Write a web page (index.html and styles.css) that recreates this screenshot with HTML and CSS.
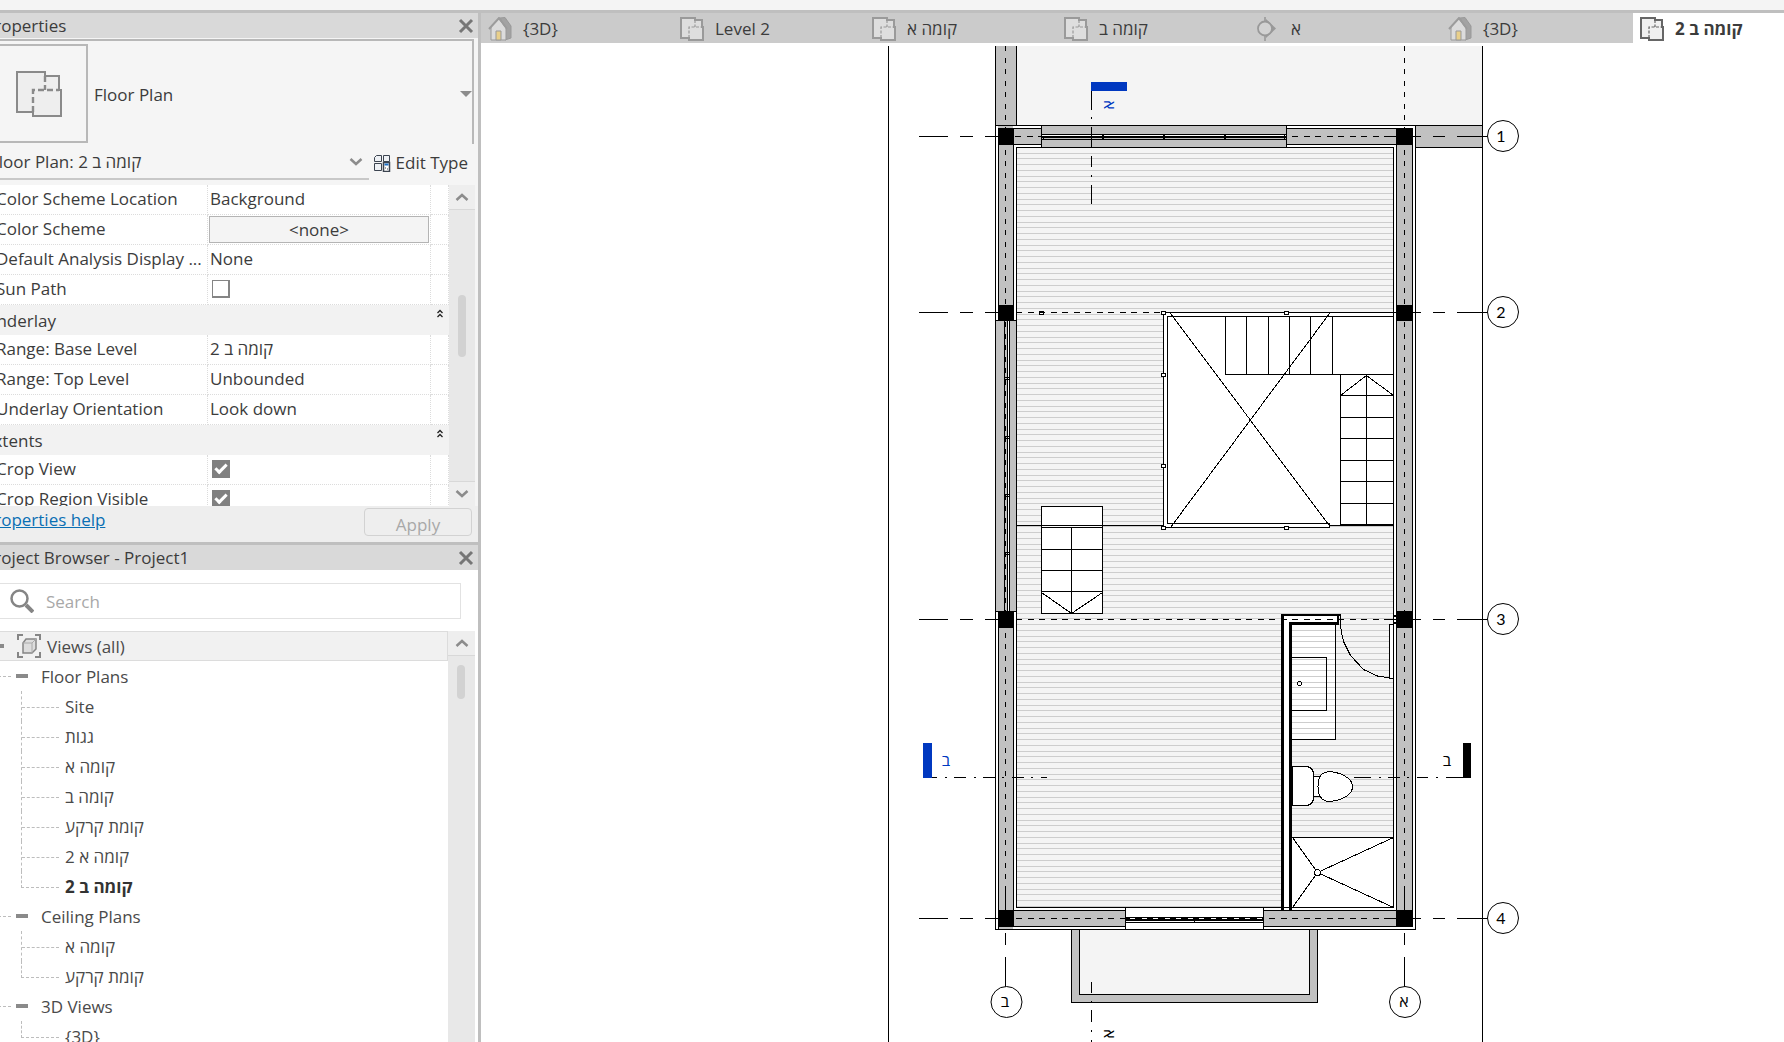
FILE: index.html
```html
<!DOCTYPE html>
<html lang="en">
<head>
    <meta charset="UTF-8">
    <meta name="viewport" content="width=device-width, initial-scale=1.0">
    <title>Project1 - Floor Plan</title>
    <link rel="stylesheet" href="styles.css">
</head>
<body>
    <!-- shared icons -->
    <svg class="defs" aria-hidden="true">
        <symbol id="icon-plan" viewBox="0 0 24 24">
            <path d="M1 1h14v2h7v7h1v13H9v-2H1z" stroke="currentColor" stroke-width="2" vector-effect="non-scaling-stroke"/>
            <path d="M15 3v7M9 21V10h13" fill="none" stroke="currentColor" stroke-width="1.200" stroke-dasharray="3 1.500"/>
        </symbol>
        <symbol id="icon-house" viewBox="0 0 24 24">
            <path d="M12 1l5-.5L23 9v12l-6 2V10z" fill="#a3a3a3" stroke="#999"/>
            <path d="M3 10l8-8 7 9v12H3z" fill="#dcdcdc" stroke="#999"/>
            <path d="M1 12L11 1l8 11" fill="none" stroke="#9c9c9c" stroke-width="2"/>
            <path d="M8 23v-9h5v9z" fill="#e8cf8a" stroke="#999"/>
        </symbol>
        <symbol id="icon-section" viewBox="0 0 24 24">
            <path d="M10 2l10 9.500-10 9.500z" fill="#999"/>
            <circle cx="9" cy="11.500" r="7" fill="#d2d2d2" stroke="#999" stroke-width="1.800"/>
            <path d="M9 0v4M9 19v5" stroke="#999" stroke-width="1.600"/>
        </symbol>
        <symbol id="icon-close" viewBox="0 0 16 16">
            <path d="M2 2l12 12M14 2L2 14" stroke="#767676" stroke-width="3"/>
        </symbol>
        <symbol id="icon-up" viewBox="0 0 14 8">
            <path d="M1.500 7L7 2l5.500 5" fill="none" stroke="#8c8c8c" stroke-width="2.500"/>
        </symbol>
        <symbol id="icon-down" viewBox="0 0 14 8">
            <path d="M1.500 1L7 6l5.500-5" fill="none" stroke="#8c8c8c" stroke-width="2.500"/>
        </symbol>
        <symbol id="icon-collapse" viewBox="0 0 6 9">
            <path d="M.5 4L3 1.500 5.500 4M.5 8L3 5.500 5.500 8" fill="none" stroke="#222" stroke-width="1.300"/>
        </symbol>
    </svg>

    <div class="ribbon"></div>

    <div class="workspace">
        <aside class="sidebar">
            <section class="panel properties">
                <header class="panel-header">
                    <h2>Properties</h2>
                    <button class="close" aria-label="Close Properties"><svg><use href="#icon-close"/></svg></button>
                </header>

                <button class="type-selector">
                    <span class="preview"><svg><use href="#icon-plan"/></svg></span>
                    <span class="type-name">Floor Plan</span>
                    <svg class="arrow" viewBox="0 0 12 6"><path d="M0 0h12L6 6z" fill="#8c8c8c"/></svg>
                </button>

                <div class="instance">
                    <div class="instance-select">
                        <select aria-label="View">
                            <option>Floor Plan: קומה ב 2</option>
                        </select>
                        <svg class="chevron"><use href="#icon-down"/></svg>
                    </div>
                    <button class="edit-type">
                        <svg viewBox="0 0 17 17" fill="#eef1f5" stroke="#3c4450">
                            <path d="M2.500.5h5v6h-7v-4zM9.500.5h6v6h-6zM.5 8.500h7v7h-7z"/>
                            <path d="M9.500 7.500h6v9h-6z" fill="#fff" stroke-width="1.500"/>
                            <path d="M10.500 9.500h4" stroke="#1c6fc4" stroke-width="2"/>
                            <path d="M11 13h1M13 14h1" stroke-width="1"/>
                        </svg>
                        Edit Type
                    </button>
                </div>

                <div class="scroll-area">
                    <table class="params">
                        <colgroup>
                            <col class="col-name">
                            <col class="col-value">
                            <col class="col-link">
                        </colgroup>
                        <tbody>
                            <tr><th scope="row">Color Scheme Location</th><td>Background</td><td></td></tr>
                            <tr><th scope="row">Color Scheme</th><td class="button-cell"><button class="scheme">&lt;none&gt;</button></td><td></td></tr>
                            <tr><th scope="row">Default Analysis Display ...</th><td>None</td><td></td></tr>
                            <tr><th scope="row"><label for="sunPath">Sun Path</label></th><td><input type="checkbox" id="sunPath"></td><td></td></tr>
                            <tr class="group"><th colspan="3">Underlay <svg><use href="#icon-collapse"/></svg></th></tr>
                            <tr><th scope="row">Range: Base Level</th><td>קומה ב 2</td><td></td></tr>
                            <tr><th scope="row">Range: Top Level</th><td>Unbounded</td><td></td></tr>
                            <tr><th scope="row">Underlay Orientation</th><td>Look down</td><td></td></tr>
                            <tr class="group"><th colspan="3">Extents <svg><use href="#icon-collapse"/></svg></th></tr>
                            <tr><th scope="row"><label for="cropView">Crop View</label></th><td><input type="checkbox" id="cropView" checked></td><td></td></tr>
                            <tr><th scope="row"><label for="cropRegion">Crop Region Visible</label></th><td><input type="checkbox" id="cropRegion" checked></td><td></td></tr>
                        </tbody>
                    </table>
                    <div class="scrollbar">
                        <button aria-label="Scroll up"><svg><use href="#icon-up"/></svg></button>
                        <div class="track"><div class="thumb"></div></div>
                        <button aria-label="Scroll down"><svg><use href="#icon-down"/></svg></button>
                    </div>
                </div>

                <footer class="panel-footer">
                    <a href="#">Properties help</a>
                    <button class="apply" disabled>Apply</button>
                </footer>
            </section>

            <section class="panel browser">
                <header class="panel-header">
                    <h2>Project Browser - Project1</h2>
                    <button class="close" aria-label="Close Project Browser"><svg><use href="#icon-close"/></svg></button>
                </header>

                <div class="search">
                    <svg viewBox="0 0 24 24" fill="none" stroke="#858585">
                        <circle cx="9.500" cy="9.500" r="8" stroke-width="2.500"/>
                        <path d="M16 16l7 7" stroke-width="4"/>
                    </svg>
                    <input type="text" placeholder="Search" aria-label="Search">
                </div>

                <div class="scroll-area">
                    <div class="tree">
                        <div class="tree-root">
                            <button class="toggle" aria-label="Collapse Views"></button>
                            <svg viewBox="0 0 24 24" fill="none" stroke="#858585">
                                <path d="M1 6V1h5M18 1h5v5M23 18v5h-5M6 23H1v-5" stroke-width="2"/>
                                <path d="M6 9l3-4h10v10l-4 4H6z" fill="#ddd" stroke-width="1.500"/>
                                <path d="M6 9h9v10M15 9l4-4" stroke="#aaa"/>
                            </svg>
                            <a href="#">Views (all)</a>
                        </div>

                        <div class="branch"><button class="toggle" aria-label="Collapse Floor Plans"></button><a href="#">Floor Plans</a></div>
                        <ul class="leaves">
                            <li><a href="#">Site</a></li>
                            <li><a href="#">גגות</a></li>
                            <li><a href="#">קומה א</a></li>
                            <li><a href="#">קומה ב</a></li>
                            <li><a href="#">קומת קרקע</a></li>
                            <li><a href="#">קומה א 2</a></li>
                            <li><a href="#" class="current">קומה ב 2</a></li>
                        </ul>

                        <div class="branch"><button class="toggle" aria-label="Collapse Ceiling Plans"></button><a href="#">Ceiling Plans</a></div>
                        <ul class="leaves">
                            <li><a href="#">קומה א</a></li>
                            <li><a href="#">קומת קרקע</a></li>
                        </ul>

                        <div class="branch"><button class="toggle" aria-label="Collapse 3D Views"></button><a href="#">3D Views</a></div>
                        <ul class="leaves">
                            <li><a href="#">{3D}</a></li>
                        </ul>
                    </div>
                    <div class="scrollbar">
                        <button aria-label="Scroll up"><svg><use href="#icon-up"/></svg></button>
                        <div class="track"><div class="thumb"></div></div>
                    </div>
                </div>
            </section>
        </aside>

        <main class="viewer">
            <nav class="tabs">
                <button><svg><use href="#icon-house"/></svg>{3D}</button>
                <button><svg><use href="#icon-plan"/></svg>Level 2</button>
                <button><svg><use href="#icon-plan"/></svg>קומה א</button>
                <button><svg><use href="#icon-plan"/></svg>קומה ב</button>
                <button><svg><use href="#icon-section"/></svg>א</button>
                <button><svg><use href="#icon-house"/></svg>{3D}</button>
                <button class="active"><svg><use href="#icon-plan"/></svg>קומה ב 2</button>
            </nav>

            <svg class="plan" viewBox="481 46 1303 996" preserveAspectRatio="xMinYMin slice">
                <defs>
                    <pattern id="boards" x="0" y="153" width="40" height="23" patternUnits="userSpaceOnUse">
                        <path d="M0 0h40v1H0zM0 5h40v1H0zM0 11h40v1H0zM0 17h40v1H0z" fill="#cdcdcd"/>
                    </pattern>
                </defs>

                <!-- floors -->
                <g class="fill-floor">
                    <rect x="1017" y="46" width="465" height="80"/>
                    <rect x="1017" y="148" width="376" height="760"/>
                    <rect x="1080" y="930" width="229" height="64"/>
                </g>
                <rect x="1017" y="148" width="376" height="760" fill="url(#boards)"/>

                <!-- walls -->
                <g class="fill-wall">
                    <rect x="995" y="46" width="21" height="79"/>
                    <rect x="1416" y="126" width="66" height="21"/>
                    <rect x="998" y="126" width="15" height="803"/>
                    <rect x="1014" y="129" width="27" height="15"/>
                    <rect x="1042" y="126" width="244" height="21"/>
                    <rect x="1287" y="129" width="109" height="15"/>
                    <rect x="1397" y="129" width="15" height="797"/>
                    <rect x="996" y="321" width="20" height="290"/>
                    <rect x="1014" y="911" width="111" height="15"/>
                    <rect x="1264" y="911" width="132" height="15"/>
                    <path d="M1071 930h9v64h229v-64h9v73h-247z"/>
                </g>
                <g class="fill-open">
                    <rect x="1008" y="321" width="1" height="290"/>
                    <rect x="1042" y="135" width="244" height="1"/>
                    <path d="M1163 312h230v213h-64v3h-166z"/>
                    <rect x="1041" y="506" width="62" height="108"/>
                    <rect x="1126" y="908" width="137" height="21"/>
                    <path d="M1283 616h56v7h-48v286h-8z"/>
                    <rect x="1292" y="838" width="101" height="69"/>
                    <rect x="1389" y="624" width="4" height="54"/>
                    <rect x="1292" y="625" width="43" height="114"/>
                </g>
                <rect x="1292" y="625" width="43" height="114" fill="url(#boards)"/>

                <!-- thin lines -->
                <g class="line" transform="translate(.5 .5)">
                    <path d="M888 46v996M1482 46v996M995 46v883h420M1016 46v79M995 125h487M1415 125v804M1415 147h67"/>
                    <path d="M998 128v182M998 627v302M1013 144v166M1013 627v284M1016 147v760h377M1016 147h377v760M1014 128h27M1014 144h27"/>
                    <path d="M1286 128h126v798M1286 144h110v766M1041 125v22M1286 125v22M1041 134h245M1041 139h245"/>
                    <path d="M1043 137v2M1102 135v4M1103 135v4M1163 135v4M1164 135v4M1224 135v4M1225 135v4M1284 135v4"/>
                    <path d="M995 320h21M995 611h21M1004 321v290M1007 321v290M1009 321v290"/>
                    <path d="M1004 377h5v2h-5zM1004 436h5v2h-5zM1004 494h5v2h-5zM1004 552h5v2h-5z"/>
                    <path d="M1014 910h111v16h-111M1125 907v22M1263 907v22M1396 910h-133v16h133M1125 922h138M1194 918v4"/>
                    <path d="M1071 929v73h246v-73M1079 929v65h230v-65"/>

                    <!-- void and railing -->
                    <path d="M1163 525v-213h230M1167 523v-207h226M1016 525h147M1167 523h162v4h-166M1329 525h64"/>
                    <path d="M1170 313l158 211M1329 313l-159 214"/>
                    <path d="M1225 316v58h168M1246 316v58M1268 316v58M1289 316v58M1310 316v58M1332 316v58"/>
                    <path d="M1340 374v150h53M1366 374v150M1340 395h53M1340 417h53M1340 438h53M1340 460h53M1340 481h53M1340 503h53M1340 395l26-20 27 20"/>
                    <path d="M1041 506h61v107h-61zM1041 525h61M1041 527h61M1071 527v86M1041 549h61M1041 570h61M1041 591h61M1041 592l30 21 31-21"/>
                    <g fill="#fff">
                        <path d="M1039 311h4v3h-4zM1161 311h4v3h-4zM1284 311h4v3h-4zM1161 373h4v3h-4zM1161 464h4v3h-4zM1161 526h4v3h-4zM1284 526h4v3h-4z"/>
                    </g>

                    <!-- bathroom -->
                    <path d="M1340 614v10M1335 624v115h-43M1292 657h34v53h-34M1389 624h4v54h-4z"/>
                    <path d="M1340 624l1 8 2 9 7 14 13 14 15 7 11 1"/>
                    <circle cx="1299" cy="683" r="2"/>
                    <g fill="#fff">
                        <path d="M1292 766h15q6 2 6 8v23q0 6-6 8h-15z"/>
                        <path d="M1313 776h6v20h-6z"/>
                        <path d="M1320 775Q1324 771 1330 771C1345 773 1352 780 1352 786C1352 793 1345 799 1330 801C1322 801 1319 797 1318 792Q1317 786 1318 780Z"/>
                    </g>
                    <path d="M1292 837h101M1292 837l25 35-25 35M1393 837l-76 35 76 35"/>
                    <circle cx="1317" cy="872" r="3" fill="#fff"/>
                </g>

                <!-- thick lines -->
                <g fill="#000">
                    <path d="M1281 614h59v2h-56v294h-3zM1289 622h50v3h-47v285h-3zM1337 614h2v10h-2z"/>
                    <rect x="1041" y="136" width="245" height="2"/>
                    <rect x="1125" y="917" width="138" height="4"/>
                    <rect x="1340" y="524" width="53" height="2"/>
                    <rect x="1393" y="615" width="3" height="2"/>
                    <rect x="1393" y="622" width="3" height="2"/>
                </g>
                <path d="M1130 918.500h133" stroke="#fff" stroke-dasharray="5 6.500"/>

                <!-- grid lines -->
                <g class="line" transform="translate(.5 .5)">
                    <path d="M1005 46v864M1404 46v864" stroke-dasharray="4 7.500"/>
                    <path d="M1005 886v24M1404 886v24M1005 933v11M1404 933v11M1005 957v29M1404 957v29"/>
                    <path d="M1015 136h26M1292 136h92M1016 312h147M1016 619h378M1016 918h110M1269 918h115" stroke-dasharray="5 6.500"/>
                    <path id="gridEnds" d="M919 136h28M960 136h12M985 136h12M1384 136h12M1413 136h7M1433 136h11M1457 136h30"/>
                    <use href="#gridEnds" y="176"/>
                    <use href="#gridEnds" y="483"/>
                    <use href="#gridEnds" y="782"/>
                </g>

                <!-- columns -->
                <g fill="#000">
                    <path d="M998 128h16v17h-16zM998 305h16v16h-16zM998 611h16v17h-16zM998 910h16v17h-16z"/>
                    <path d="M1396 128h17v17h-17zM1396 305h17v16h-17zM1396 611h17v17h-17zM1396 910h17v17h-17z"/>
                </g>

                <!-- section marks -->
                <g fill="#0038c0">
                    <rect x="1091" y="82" width="36" height="9"/>
                    <rect x="923" y="743" width="9" height="35"/>
                </g>
                <rect x="1463" y="743" width="8" height="35" fill="#000"/>
                <g class="line" transform="translate(.5 .5)">
                    <path d="M1091 91v18M1091 117v1M1091 127v18M1091 146v1M1091 156v10M1091 175v1M1091 185v18"/>
                    <path d="M1091 982v10M1091 1001v1M1091 1010v11M1091 1030v1M1091 1040v2"/>
                    <path d="M932 777h4M945 777h1M954 777h11M974 777h1M983 777h11M1002 777h1M1012 777h11M1031 777h1M1041 777h5"/>
                    <path d="M1354 777h16M1379 777h1M1388 777h11M1407 777h1M1417 777h10M1436 777h1M1446 777h17"/>
                </g>

                <!-- bubbles and letters -->
                <g class="bubble">
                    <circle cx="1503" cy="136" r="15.500"/>
                    <circle cx="1503" cy="312" r="15.500"/>
                    <circle cx="1503" cy="619" r="15.500"/>
                    <circle cx="1503" cy="918" r="15.500"/>
                    <circle cx="1006.500" cy="1002" r="15.500"/>
                    <circle cx="1405" cy="1002" r="15.500"/>
                </g>
                <g class="mark">
                    <text x="1501" y="142">1</text>
                    <text x="1501" y="318">2</text>
                    <text x="1501" y="625">3</text>
                    <text x="1501" y="924">4</text>
                    <text x="1005" y="1007">ב</text>
                    <text x="1404" y="1007">א</text>
                    <text x="1447" y="766">ב</text>
                    <text x="946" y="766" class="blue">ב</text>
                    <text transform="translate(1104 105) rotate(90)" class="blue">א</text>
                    <text transform="translate(1104 1034) rotate(90)">א</text>
                </g>
            </svg>
        </main>
    </div>
</body>
</html>
```

FILE: styles.css
```css
*, *::before {
    box-sizing: border-box;
}
body {
    margin: 0;
    height: 100vh;
    overflow: hidden;
    display: flex;
    flex-direction: column;
    font-family: "Open Sans", "Noto Sans", "Liberation Sans", sans-serif;
    font-size: 17px;
    line-height: 24px;
    color: #3c3c3c;
    background-color: #fff;
}
button, input, select {
    font: inherit;
    color: inherit;
    border: none;
    background: none;
    padding: 0;
    margin: 0;
}
a {
    color: inherit;
    text-decoration: none;
}
.defs {
    display: none;
}
.ribbon {
    height: 13px;
    flex-shrink: 0;
    background-color: #f4f4f4;
    border-bottom: 3px solid #bfbfbf;
}

/* the dock is slid a little past the left edge of the window */
.workspace {
    flex: 1;
    min-height: 0;
    margin-left: -16px;
    display: grid;
    grid-template-columns: 497px 1fr;
}
.sidebar {
    display: grid;
    grid-template-rows: 532px 1fr;
    min-height: 0;
    border-right: 3px solid #bfbfbf;
}
.panel {
    display: flex;
    flex-direction: column;
    min-height: 0;
    overflow: hidden;
}
.properties {
    background-color: #f5f5f5;
    border-bottom: 3px solid #bfbfbf;
}
.panel-header {
    height: 25px;
    flex-shrink: 0;
    display: flex;
    align-items: center;
    justify-content: space-between;
    padding-right: 4px;
    background-color: #d9d9d9;
}
.panel-header h2 {
    margin: 0;
    font-size: 17px;
    font-weight: normal;
}
.close, .close svg {
    display: block;
    width: 16px;
    height: 16px;
}

.type-selector {
    height: 105px;
    flex-shrink: 0;
    margin: 1px 4px 0 0;
    padding-top: 3px;
    display: flex;
    align-items: flex-start;
    border-top: 2px solid #b8b8b8;
    border-right: 2px solid #b8b8b8;
    text-align: left;
}
.preview {
    width: 104px;
    height: 99px;
    display: flex;
    align-items: center;
    justify-content: center;
    padding-left: 6px;
    border: 2px solid #b8b8b8;
    color: #8a8a8a;
}
.preview svg {
    width: 48px;
    height: 48px;
    fill: #eee;
}
.type-name {
    flex: 1;
    padding-left: 6px;
    line-height: 102px;
}
.arrow {
    width: 12px;
    height: 6px;
    align-self: center;
}

.instance {
    height: 41px;
    flex-shrink: 0;
    padding: 0 10px 5px 0;
    display: flex;
    justify-content: space-between;
}
.instance-select {
    width: 385px;
    padding-top: 2px;
    display: flex;
    align-items: center;
    border-bottom: 2px solid #c8c8c8;
}
.instance-select select {
    appearance: none;
    flex: 1;
    padding-left: 6px;
}
.chevron {
    width: 14px;
    height: 8px;
    margin-right: 6px;
}
.edit-type {
    padding-top: 2px;
    display: flex;
    align-items: center;
    gap: 5px;
}
.edit-type svg {
    width: 17px;
    height: 17px;
}

.scroll-area {
    flex: 1;
    min-height: 0;
    display: flex;
    overflow: hidden;
    padding-right: 3px;
}
.params {
    width: 465px;
    align-self: flex-start;
    table-layout: fixed;
    border-collapse: separate;
    border-spacing: 0;
    background-color: #fff;
}
.col-name {
    width: 224px;
}
.col-value {
    width: 223px;
}
.params th, .params td {
    height: 30px;
    padding: 0 0 2px 2px;
    font-weight: normal;
    line-height: 24px;
    text-align: left;
    white-space: nowrap;
    border-right: 1px dotted #dcdcdc;
    border-bottom: 1px dotted #dcdcdc;
}
.params th {
    padding-left: 12px;
}
.params .group th {
    padding: 2px 0 0;
    background-color: #f2f2f2;
    border-color: #f2f2f2;
}
.group svg {
    float: right;
    width: 6px;
    height: 9px;
    margin-right: 5px;
}
.params .button-cell {
    padding: 0 1px;
}
.scheme {
    display: block;
    width: 100%;
    height: 27px;
    padding-top: 1px;
    background-color: #f4f4f4;
    border: 1px solid #b4b4b4;
}
.params input {
    appearance: none;
    display: block;
    width: 18px;
    height: 18px;
    margin-left: 2px;
    border: 1px solid #858585;
    border-width: 1px 2px 2px 1px;
    background-color: #fff;
}
.params input:checked {
    border: none;
    background-color: #808080;
}
.params input:checked::before {
    content: "";
    display: block;
    width: 12px;
    height: 7px;
    margin: 5px 0 0 3px;
    border-left: 3px solid #fff;
    border-bottom: 3px solid #fff;
    transform: translateY(-1px) rotate(-45deg);
}

.scrollbar {
    flex: 1;
    display: flex;
    flex-direction: column;
    background-color: #e8e8e8;
}
.scrollbar button {
    height: 25px;
    display: flex;
    align-items: center;
    justify-content: center;
    background-color: #eee;
    border: 0 solid #d8d8d8;
    border-bottom-width: 1px;
}
.scrollbar button:last-child {
    border-width: 1px 0 0;
}
.scrollbar svg {
    width: 14px;
    height: 8px;
}
.track {
    flex: 1;
    padding: 85px 9px 0;
}
.thumb {
    width: 8px;
    height: 62px;
    border-radius: 4px;
    background-color: #d2d2d2;
}

.panel-footer {
    height: 36px;
    flex-shrink: 0;
    display: flex;
    align-items: flex-start;
    justify-content: space-between;
    padding: 2px 6px 0 0;
    background-color: #eee;
}
.panel-footer a {
    color: #0a6fb4;
    text-decoration: underline;
}
.apply {
    width: 108px;
    height: 28px;
    padding-top: 4px;
    border: 1px solid #d2d2d2;
    border-radius: 4px;
    color: #a8a8a8;
}

.browser {
    background-color: #fff;
}
.search {
    height: 36px;
    flex-shrink: 0;
    margin: 13px 17px 12px 0;
    padding-left: 25px;
    display: flex;
    align-items: center;
    gap: 12px;
    border: 1px solid #e2e2e2;
}
.search svg {
    width: 24px;
    height: 24px;
}
.search input {
    flex: 1;
    padding-top: 1px;
    outline: none;
}
.search input::placeholder {
    color: #a8a8a8;
    opacity: 1;
}
.tree {
    width: 464px;
    color: #4a4a4a;
}
.tree a {
    padding-top: 2px;
}
.tree-root {
    height: 30px;
    display: flex;
    align-items: center;
    padding-left: 8px;
    background-color: #f1f1f1;
    border: 1px solid #dcdcdc;
    border-left: none;
}
.tree-root svg {
    width: 24px;
    height: 24px;
    margin: 0 6px 0 13px;
}
.toggle {
    width: 12px;
    height: 4px;
    background-color: #8a8a8a;
}
.branch {
    height: 30px;
    display: flex;
    align-items: center;
    padding-left: 9px;
}
.branch::before {
    content: "";
    width: 18px;
    margin-right: 5px;
    border-top: 1px dashed #bdbdbd;
}
.branch a {
    padding-left: 13px;
}
.leaves {
    list-style: none;
    margin: 0;
    padding: 0 0 0 37px;
}
.leaves li {
    height: 30px;
    display: flex;
    align-items: center;
    border-left: 1px dashed #bdbdbd;
}
.leaves li:last-child {
    border-left: none;
}
.leaves li::before {
    content: "";
    align-self: flex-start;
    width: 37px;
    height: 17px;
    margin-right: 6px;
    border-bottom: 1px dashed #bdbdbd;
}
.leaves li:last-child::before {
    width: 38px;
    border-left: 1px dashed #bdbdbd;
}
.current {
    font-weight: bold;
    color: #333;
}
.browser .track {
    padding-top: 9px;
}
.browser .thumb {
    height: 34px;
}

.viewer {
    display: flex;
    flex-direction: column;
    min-width: 0;
    min-height: 0;
}
.tabs {
    height: 30px;
    flex-shrink: 0;
    margin-bottom: 3px;
    display: flex;
    overflow: hidden;
    background-color: #cbcbcb;
}
.tabs button {
    width: 192px;
    flex-shrink: 0;
    display: flex;
    align-items: center;
    gap: 11px;
    padding: 1px 0 0 7px;
}
.tabs svg {
    width: 24px;
    height: 24px;
    color: #9a9a9a;
    fill: #dedede;
}
.tabs .active {
    background-color: #fff;
    font-weight: bold;
}
.tabs .active svg {
    color: #666;
    fill: #f0f0f0;
}

.plan {
    flex: 1;
    min-height: 0;
    width: 100%;
    display: block;
    shape-rendering: crispEdges;
}
.fill-floor {
    fill: #f4f4f4;
}
.fill-wall {
    fill: #c1c1c1;
}
.fill-open {
    fill: #fff;
}
.line {
    fill: none;
    stroke: #000;
    stroke-width: 1px;
    stroke-linecap: square;
}
.bubble {
    fill: #fff;
    stroke: #000;
    shape-rendering: auto;
}
.mark {
    font-family: Lato, "Open Sans", "Liberation Sans", sans-serif;
    font-size: 16px;
    text-anchor: middle;
    fill: #000;
}
.mark .blue {
    fill: #0038c0;
}
```
